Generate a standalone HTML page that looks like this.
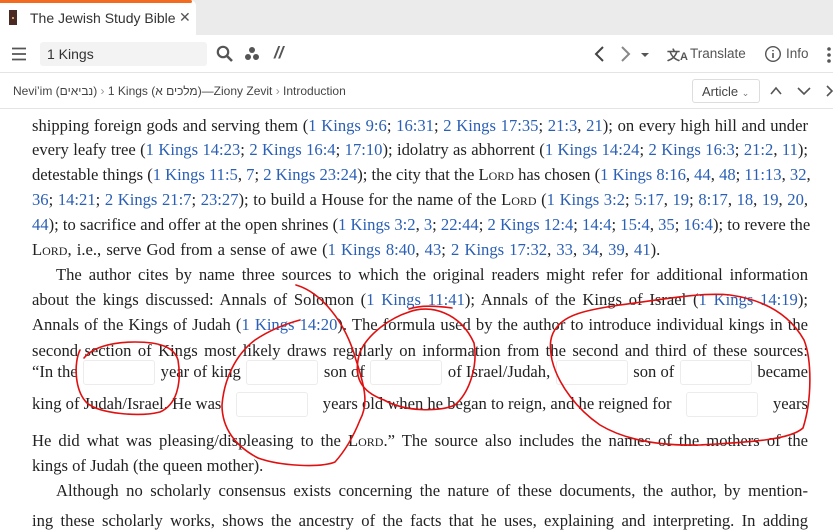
<!DOCTYPE html>
<html><head><meta charset="utf-8"><style>
*{margin:0;padding:0;box-sizing:border-box}
body{width:833px;height:513px;overflow:hidden;background:#fff;font-family:"Liberation Sans",sans-serif;position:relative;color:#333}
.abs{position:absolute}
.tabbar{left:0;top:0;width:833px;height:35px;background:#ebebeb}
.tab{left:0;top:0;width:196px;height:36px;background:#fff;border-top-right-radius:6px}
.tab .or{position:absolute;left:0;top:0;width:192px;height:3px;background:#f26b21;border-radius:0 2px 2px 0}
.ln{position:absolute;left:32px;width:776px;font-family:"Liberation Serif",serif;font-size:16.6px;color:#222;white-space:nowrap;text-align:justify;text-align-last:justify;line-height:20px}
.ln a{color:#2a5fb5;text-decoration:none}
.sc{font-variant:small-caps}
.row{position:absolute;left:32px;width:776px;display:flex;justify-content:space-between;align-items:center;font-family:"Liberation Serif",serif;font-size:16.6px;color:#222;white-space:nowrap;height:26px}
.bx{display:inline-block;width:72px;height:25px;border:1px solid #ececec;border-radius:3px}
</style></head><body>
<div class="abs tabbar"></div>
<div class="abs tab"><div class="or"></div></div>
<div class="abs" style="left:9px;top:10px;width:8px;height:15px;background:#4a2a22"></div>
<div class="abs" style="left:12px;top:17px;width:2px;height:2px;background:#c9a070"></div>
<div class="abs" style="left:30px;top:10px;font-size:14px;color:#333">The Jewish Study Bible</div>
<div class="abs" style="left:179px;top:9px;font-size:14px;color:#555">✕</div>
<svg class="abs" style="left:12px;top:47px" width="16" height="14"><path d="M0 1.5H14M0 7H14M0 12.5H14" stroke="#555" stroke-width="1.8"/></svg>
<div class="abs" style="left:40px;top:42px;width:167px;height:24px;background:#f3f3f3;border-radius:3px"></div>
<div class="abs" style="left:47px;top:46px;font-size:14px;color:#333">1 Kings</div>
<svg class="abs" style="left:216px;top:45px" width="18" height="18"><circle cx="7" cy="7" r="5.2" stroke="#555" stroke-width="2.2" fill="none"/><path d="M11 11L16 16" stroke="#555" stroke-width="2.6"/></svg>
<svg class="abs" style="left:244px;top:46px" width="16" height="16"><circle cx="8" cy="4" r="3" fill="#555"/><circle cx="4" cy="11" r="3" fill="#555"/><circle cx="12" cy="11" r="3" fill="#555"/></svg>
<div class="abs" style="left:274px;top:43px;font-size:17px;color:#555;font-style:italic;font-weight:bold">//</div>
<svg class="abs" style="left:592px;top:45px" width="60" height="18"><path d="M11 2L4 9L11 16" stroke="#444" stroke-width="2" fill="none"/><path d="M30 2L37 9L30 16" stroke="#888" stroke-width="2" fill="none"/><path d="M49 8L57 8L53 12Z" fill="#555"/></svg>
<div class="abs" style="left:667px;top:45px;font-size:13px;color:#555;font-weight:bold">文<span style="font-size:11px">A</span></div>
<div class="abs" style="left:690px;top:46px;font-size:13.5px;color:#555">Translate</div>
<svg class="abs" style="left:764px;top:45px" width="18" height="18"><circle cx="9" cy="9" r="7.3" stroke="#555" stroke-width="1.4" fill="none"/><path d="M9 8V13M9 5V6.2" stroke="#555" stroke-width="1.6"/></svg>
<div class="abs" style="left:786px;top:46px;font-size:13.5px;color:#555">Info</div>
<svg class="abs" style="left:826px;top:46px" width="6" height="18"><circle cx="3" cy="3" r="1.8" fill="#555"/><circle cx="3" cy="9" r="1.8" fill="#555"/><circle cx="3" cy="15" r="1.8" fill="#555"/></svg>
<div class="abs" style="left:0;top:72px;width:833px;height:1px;background:#e4e4e4"></div>
<div class="abs" style="left:13px;top:84px;font-size:12px;color:#444;font-family:'Liberation Sans','Noto Sans CJK JP',sans-serif">Nevi’im (נביאים) <span style="color:#999">›</span> 1 Kings (מלכים א)—Ziony Zevit <span style="color:#999">›</span> Introduction</div>
<div class="abs" style="left:692px;top:79px;width:68px;height:24px;border:1px solid #ddd;border-radius:3px"></div>
<div class="abs" style="left:702px;top:84px;font-size:13px;color:#444">Article <span style="font-size:9px;color:#777">⌄</span></div>
<svg class="abs" style="left:768px;top:84px" width="65" height="14"><path d="M3 10L8 4L13 10" stroke="#555" stroke-width="1.6" fill="none"/><path d="M30 4L36 10L42 4" stroke="#555" stroke-width="1.6" fill="none"/><path d="M59 2L64 7L59 12" stroke="#555" stroke-width="1.6" fill="none"/></svg>
<div class="abs" style="left:0;top:108px;width:833px;height:1px;background:#e4e4e4"></div>
<div class="ln" style="top:116px">shipping foreign gods and serving them (<a>1 Kings 9:6</a>; <a>16:31</a>; <a>2 Kings 17:35</a>; <a>21:3</a>, <a>21</a>); on every high hill and under</div>
<div class="ln" style="top:140px">every leafy tree (<a>1 Kings 14:23</a>; <a>2 Kings 16:4</a>; <a>17:10</a>); idolatry as abhorrent (<a>1 Kings 14:24</a>; <a>2 Kings 16:3</a>; <a>21:2</a>, <a>11</a>);</div>
<div class="ln" style="top:165px">detestable things (<a>1 Kings 11:5</a>, <a>7</a>; <a>2 Kings 23:24</a>); the city that the <span class="sc">Lord</span> has chosen (<a>1 Kings 8:16</a>, <a>44</a>, <a>48</a>; <a>11:13</a>, <a>32</a>,</div>
<div class="ln" style="top:190px"><a>36</a>; <a>14:21</a>; <a>2 Kings 21:7</a>; <a>23:27</a>); to build a House for the name of the <span class="sc">Lord</span> (<a>1 Kings 3:2</a>; <a>5:17</a>, <a>19</a>; <a>8:17</a>, <a>18</a>, <a>19</a>, <a>20</a>,</div>
<div class="ln" style="top:215px"><a>44</a>); to sacrifice and offer at the open shrines (<a>1 Kings 3:2</a>, <a>3</a>; <a>22:44</a>; <a>2 Kings 12:4</a>; <a>14:4</a>; <a>15:4</a>, <a>35</a>; <a>16:4</a>); to revere the</div>
<div class="ln" style="top:240px;text-align-last:left;word-spacing:1px"><span class="sc">Lord</span>, i.e., serve God from a sense of awe (<a>1 Kings 8:40</a>, <a>43</a>; <a>2 Kings 17:32</a>, <a>33</a>, <a>34</a>, <a>39</a>, <a>41</a>).</div>
<div class="ln" style="top:265px;left:56px;width:752px">The author cites by name three sources to which the original readers might refer for additional information</div>
<div class="ln" style="top:290px">about the kings discussed: Annals of Solomon (<a>1 Kings 11:41</a>); Annals of the Kings of Israel (<a>1 Kings 14:19</a>);</div>
<div class="ln" style="top:315px">Annals of the Kings of Judah (<a>1 Kings 14:20</a>). The formula used by the author to introduce individual kings in the</div>
<div class="ln" style="top:341px">second section of Kings most likely draws regularly on information from the second and third of these sources:</div>
<div class="row" style="top:359px"><span>“In the</span><span class="bx"></span><span>year of king</span><span class="bx"></span><span>son of</span><span class="bx"></span><span>of Israel/Judah,</span><span class="bx"></span><span>son of</span><span class="bx"></span><span>became</span></div>
<div class="row" style="top:391px"><span>king of Judah/Israel. He was</span><span class="bx"></span><span>years old when he began to reign, and he reigned for</span><span class="bx"></span><span>years</span></div>
<div class="ln" style="top:431px">He did what was pleasing/displeasing to the <span class="sc">Lord</span>.” The source also includes the names of the mothers of the</div>
<div class="ln" style="top:456px;text-align-last:left">kings of Judah (the queen mother).</div>
<div class="ln" style="top:481px;left:56px;width:752px">Although no scholarly consensus exists concerning the nature of these documents, the author, by mention-</div>
<div class="ln" style="top:511px">ing these scholarly works, shows the ancestry of the facts that he uses, explaining and interpreting. In adding</div>
<svg class="abs" style="left:0;top:0" width="833" height="513" fill="none" stroke="#e01010" stroke-width="1.6" stroke-linecap="round">
<path d="M80 350 C74 362 74 390 87 403 C100 414 140 417 160 412 C176 405 182 385 178 360 C174 347 160 342 135 342 C110 342 92 348 84 358"/>
<path d="M296 285 C320 292 345 320 356 360 C366 390 368 405 360 420 C352 440 344 452 335 462 C320 468 280 466 258 458 C235 446 222 428 222 405 C224 380 235 355 255 340 C270 330 285 324 300 320"/>
<path d="M409 312 C430 304 460 312 474 343 C478 365 470 392 455 405 C440 412 405 412 384 400 C362 392 352 378 360 352 C368 334 390 318 409 312"/>
<path d="M409 309 C420 305 438 306 452 308"/>
<path d="M557 327 C566 315 585 310 620 305 C660 300 700 292 730 295 C765 300 790 315 804 340 C812 360 812 400 803 428 C790 440 750 442 700 445 C660 446 625 440 600 425 C578 410 558 385 552 360 C549 345 550 335 557 327"/>
</svg>
</body></html>
